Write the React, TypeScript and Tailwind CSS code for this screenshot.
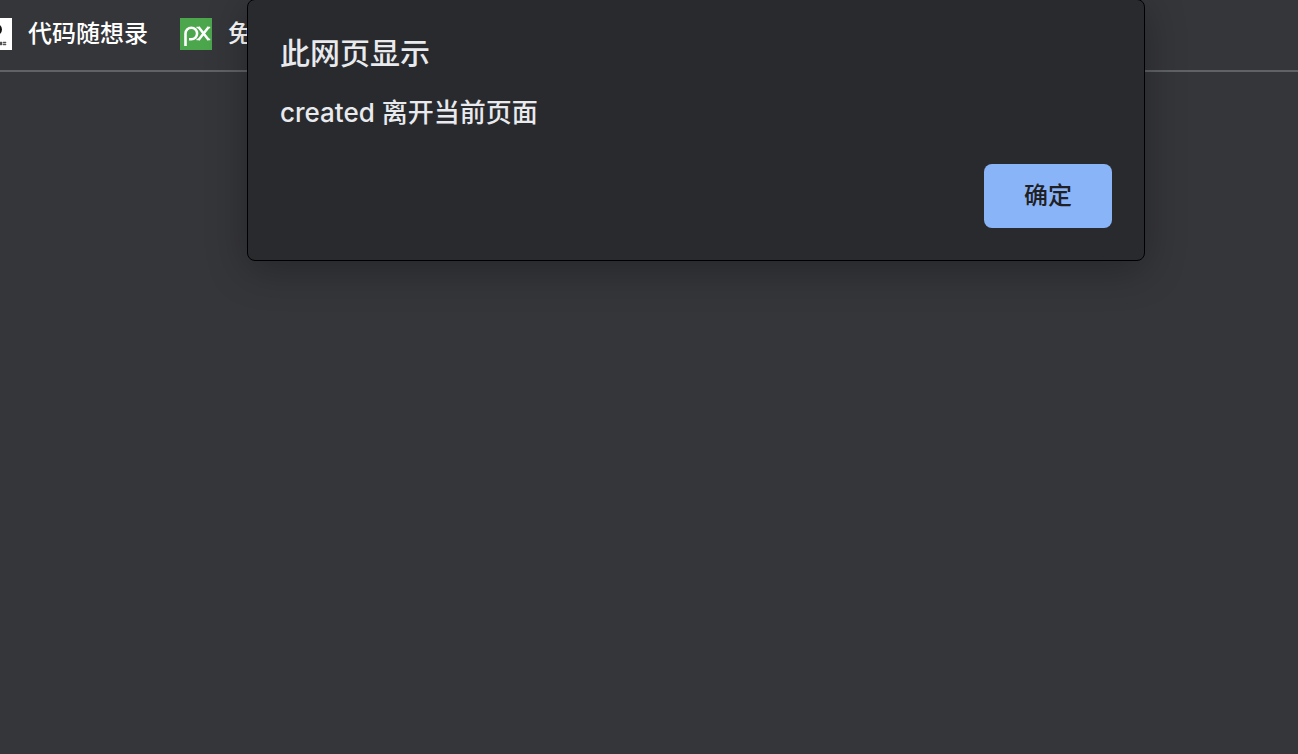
import { useState } from 'react'

interface BookmarkProps {
  label: string
  icon: React.ReactNode
}

function Bookmark({ label, icon }: BookmarkProps) {
  return (
    <a href="#" className="flex shrink-0 items-center gap-4 text-2xl font-medium text-white">
      {icon}
      <span className="whitespace-nowrap">{label}</span>
    </a>
  )
}

function CarlIcon() {
  return (
    <svg width="32" height="32" viewBox="0 0 32 32" aria-hidden="true">
      <rect width="32" height="32" fill="#fff" />
      <ellipse cx="15" cy="11.500" rx="7" ry="6.500" fill="#111" />
      <path d="M14 7.500c6 0 6 8 0 8z" fill="#fff" />
      <path d="M6 24h4v3H6zM12 24h3v3h-3zM17 24h2v3h-2zM20 24h2v3h-2zM23 24h3v1h-3zM23 26h3v1h-3z" fill="#444" stroke="#666" strokeWidth="0.500" />
    </svg>
  )
}

function PexelsIcon() {
  return (
    <svg width="32" height="32" viewBox="0 0 32 32" fill="none" stroke="#fff" aria-hidden="true">
      <rect width="32" height="32" fill="#4ca64c" stroke="none" />
      <path d="M5.500 28V15.500a5.800 5.800 0 1 1 5.800 5.800H9" strokeWidth="2.600" />
      <path d="M18.500 9l10.200 13M28.700 9l-10.200 13" strokeWidth="2.600" />
      <path d="M16.500 9.500h2.400M28.300 9.500h1.900M16.500 21.500h2.400M28.300 21.500h1.900" strokeWidth="1.600" />
    </svg>
  )
}

interface AlertDialogProps {
  title: string
  message: string
  onClose: () => void
}

function AlertDialog({ title, message, onClose }: AlertDialogProps) {
  return (
    <div
      role="alertdialog"
      aria-labelledby="alert-title"
      aria-describedby="alert-message"
      className="absolute -top-px left-[247px] w-[898px] rounded-lg border border-black bg-[#292a2d] p-8 font-medium text-[#e8eaed] shadow-[0_8px_40px_rgba(0,0,0,0.3)]"
    >
      <h1 id="alert-title" className="text-[30px] leading-[42px]">{title}</h1>
      <p id="alert-message" className="mt-5 text-[26px] leading-[38px]">{message}</p>
      <div className="mt-8 flex justify-end">
        <button
          type="button"
          onClick={onClose}
          className="h-16 w-32 rounded-lg bg-[#8ab4f8] text-2xl font-medium text-[#202124]"
        >
          确定
        </button>
      </div>
    </div>
  )
}

export default function App() {
  const [isOpen, setIsOpen] = useState(true)

  return (
    <div className="relative min-h-screen overflow-hidden bg-[#35363a] font-['Inter','Noto_Sans_CJK_SC',sans-serif]">
      <nav className="flex h-[72px] items-center border-b-2 border-[#5f6368] pb-0.5">
        <div className="-ml-5 flex items-center gap-8">
          <Bookmark label="代码随想录" icon={<CarlIcon />} />
          <Bookmark label="免" icon={<PexelsIcon />} />
        </div>
      </nav>
      {isOpen && (
        <AlertDialog
          title="此网页显示"
          message="created 离开当前页面"
          onClose={() => setIsOpen(false)}
        />
      )}
    </div>
  )
}
